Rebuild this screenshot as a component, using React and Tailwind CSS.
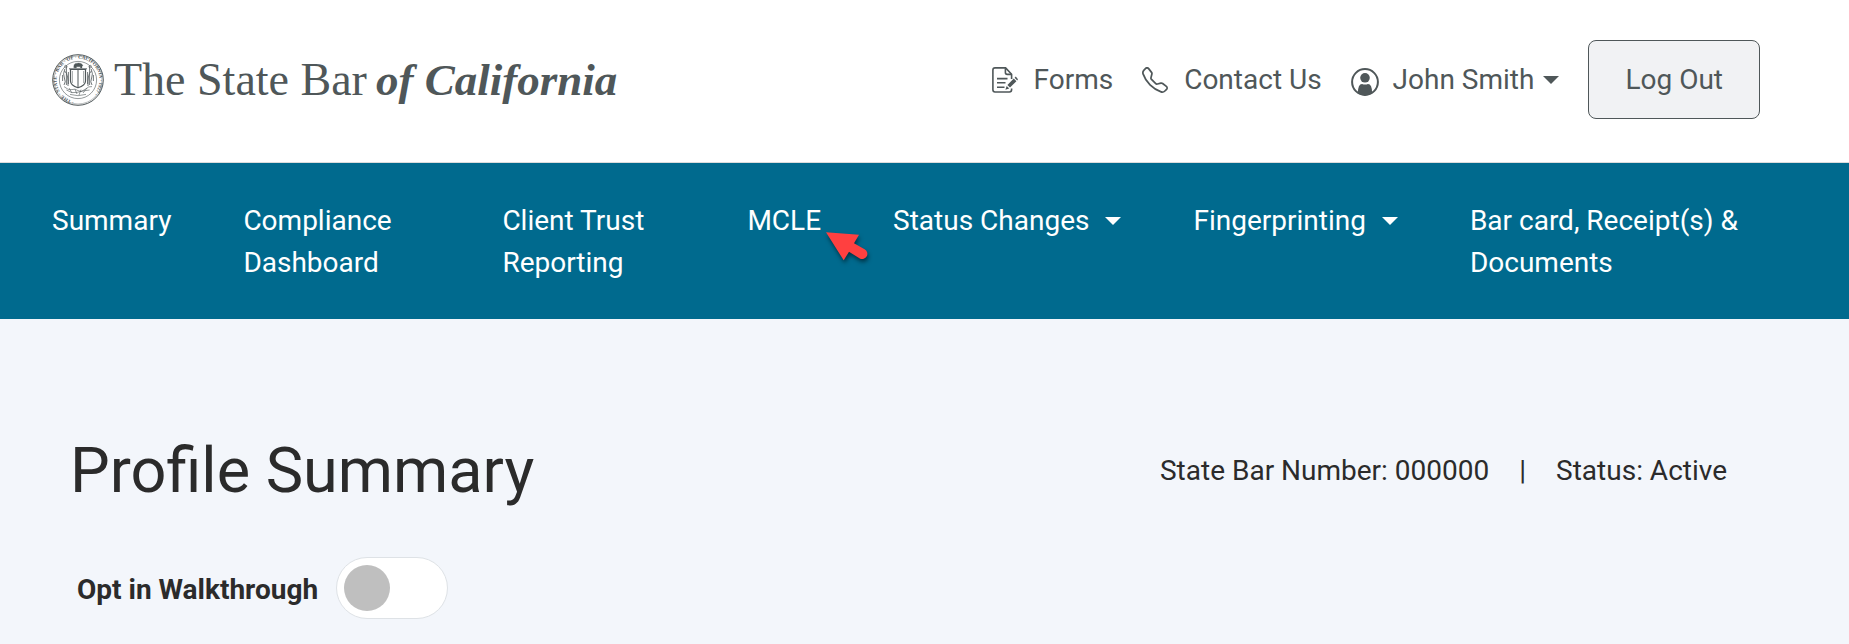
import React from "react";
import { BsTelephone } from "react-icons/bs";

const Caret = () => (
  <svg viewBox="0 0 16 8" className="h-2 w-4 shrink-0" aria-hidden="true">
    <path d="M0 0H16L8 8Z" fill="currentColor" />
  </svg>
);

const FormsIcon = () => (
  <svg viewBox="0 0 26 26" className="size-[26px] shrink-0" fill="none" stroke="currentColor" strokeWidth="1.6" aria-hidden="true">
    <path d="M19.6 21.5V22.6Q19.6 25 17.4 25H3Q.9 25 .9 22.8V3Q.9.9 3 .9H13.6L19.6 7.2V12" />
    <path d="M13.4 1.2V5.6Q13.4 7.4 15.2 7.4H19.4" />
    <path d="M5 11.6H15.5M5 15.8H13.5M5 20.2H12.5" />
    <path d="M15.4 18L21.8 11.6L24.4 14.2L18 20.6ZM22.6 10.8L23.8 9.6L26 12.2L25.2 13.4ZM14.7 19L17.2 21.5L13.4 22.7Z" fill="currentColor" stroke="none" />
  </svg>
);

const UserIcon = () => (
  <svg viewBox="0 0 28 28" className="mt-1 size-7 shrink-0" aria-hidden="true">
    <circle cx="14" cy="14" r="12.9" fill="none" stroke="currentColor" strokeWidth="2" />
    <circle cx="14" cy="9.8" r="4.8" fill="currentColor" />
    <path d="M6.8 25.2Q7 16 11 16Q14 17.2 17 16Q21 16 21.2 25.2Q14 30 6.8 25.2Z" fill="currentColor" />
  </svg>
);

const Seal = () => (
  <svg viewBox="0 0 52 52" className="size-[52px] shrink-0" fill="none" stroke="currentColor" aria-hidden="true">
    <defs>
      <path id="seal-top" d="M26 47.5A21.5 21.5 0 1 1 26.1 47.5" />
    </defs>
    <circle cx="26" cy="26" r="25.3" strokeWidth="1" />
    <circle cx="26" cy="26" r="24" strokeWidth="0.4" />
    <circle cx="26" cy="26" r="18.6" strokeWidth="0.6" />
    <text fill="currentColor" stroke="none" fontSize="5" fontWeight="bold" fontFamily="Liberation Serif, serif">
      <textPath href="#seal-top" startOffset="4">· THE · STATE · BAR · OF · CALIFORNIA · 1927 ·</textPath>
    </text>
    <path d="M18.5 15.5H33.5V27Q33.5 31.5 26 33.8Q18.5 31.5 18.5 27Z" fill="white" strokeWidth="1.2" />
    <path d="M26 16V33.4" strokeWidth="1" />
    <path d="M20.4 17V29M31.6 17V29" strokeWidth="0.5" />
    <path d="M21.8 13.8Q21.5 9.6 24 9.4Q27 8.2 29.5 9.8L31 11.6L30 12.2V14H28.4V12.8H24.4V14Z" fill="currentColor" strokeWidth="0.3" />
    <path d="M17 14.8H35" strokeWidth="0.9" />
    <path d="M14.4 12V31M12.6 17Q15 19 15.6 23T16 32M12.8 15Q10.6 20 12.4 24T12 31M16.4 18V30M10.6 21V27M37.6 12V31M39.4 17Q37 19 36.4 23T36 32M39.2 15Q41.4 20 39.6 24T40 31M35.6 18V30M41.4 21V27" strokeWidth="0.8" />
    <circle cx="13.8" cy="12.6" r="1.3" strokeWidth="0.6" />
    <circle cx="38.2" cy="12.6" r="1.3" strokeWidth="0.6" />
    <path d="M12 32.6Q17 37 20 35.6T26 36.6T33 35.4T40 32.6M14.4 36Q20 40 25 38.4T37.6 36M18 40.4Q26 43 34 40.4M17 34L20 39M35 34L31 39M23 35.4L25 40M29 35.6L27 41" strokeWidth="0.6" />
  </svg>
);

const Pointer = () => (
  <svg viewBox="0 0 48 38" className="absolute top-[31px] left-[78px] h-[38px] w-12 drop-shadow-[1px_3px_2px_rgba(0,0,0,0.5)]" aria-hidden="true">
    <path d="M1 1.3L34 3.7L29 12.3L39.6 18.3A5 5 0 0 1 34.8 27.4L24 20.8L18.7 29.3Z" fill="#ff4040" />
  </svg>
);

const navItems = [
  { label: "Summary" },
  { label: "Compliance Dashboard", width: "w-[187px]" },
  { label: "Client Trust Reporting", width: "w-[173px]" },
  { label: "MCLE", pointer: true },
  { label: "Status Changes", menu: true },
  { label: "Fingerprinting", menu: true },
  { label: "Bar card, Receipt(s) & Documents", width: "w-[300px]" },
];

export default function App() {
  return (
    <div className="min-h-screen bg-[#f3f6fb] font-[Roboto,sans-serif] text-[28px] leading-[42px] text-[#2b2b2b]">
      <header className="flex items-center justify-between border-b border-[#dcdcdc] bg-white pt-10 pr-[89px] pb-[43px] pl-[52px] text-[#4f5759]">
        <a href="#home" className="flex items-center gap-[10px] whitespace-nowrap">
          <Seal />
          <span className="flex items-baseline gap-[9px] font-['Liberation_Serif',serif] text-[46px] leading-[52px]">
            <span>The State Bar</span>
            <em className="text-[45px] font-bold">of California</em>
          </span>
        </a>
        <div className="flex items-center gap-[29px] whitespace-nowrap">
          <a href="#forms" className="flex items-center gap-4">
            <FormsIcon />
            Forms
          </a>
          <a href="#contact" className="flex items-center gap-4">
            <BsTelephone className="size-[26px] shrink-0" />
            Contact Us
          </a>
          <button type="button" className="flex items-center gap-[14px]">
            <UserIcon />
            <span className="flex items-center gap-[9px]">
              John Smith
              <Caret />
            </span>
          </button>
          <button type="button" className="rounded-lg border border-[#4f5759] bg-[#f1f2f4] px-9 py-[18px] leading-[41px]">
            Log Out
          </button>
        </div>
      </header>

      <nav className="bg-[#006a8e] pt-[37px] pr-[52px] pb-[35px] pl-[52px] text-white">
        <ul className="flex items-start gap-[72px]">
          {navItems.map((item) => (
            <li key={item.label} className={item.width ?? "whitespace-nowrap"}>
              {item.menu ? (
                <button type="button" className="flex items-center gap-4">
                  {item.label}
                  <Caret />
                </button>
              ) : (
                <a href="#section" className="relative block">
                  {item.label}
                  {item.pointer && <Pointer />}
                </a>
              )}
            </li>
          ))}
        </ul>
      </nav>

      <main className="pt-[110px] pr-[122px] pb-6 pl-[70px]">
        <div className="flex items-center justify-between">
          <h1 className="text-[63px] leading-[84px]">Profile Summary</h1>
          <p className="flex gap-[30px]">
            <span>State Bar Number: 000000</span>
            <span>|</span>
            <span>Status: Active</span>
          </p>
        </div>
        <div className="mt-11 ml-[7px] flex w-fit items-center gap-[18px] font-bold">
          <label htmlFor="walkthrough" className="pt-[3px]">Opt in Walkthrough</label>
          <input
            id="walkthrough"
            type="checkbox"
            role="switch"
            className="flex h-[62px] w-28 appearance-none items-center rounded-full border border-[#dee2e6] bg-white px-[7px] before:size-[46px] before:rounded-full before:bg-[#bfbfbf] checked:justify-end"
          />
        </div>
      </main>
    </div>
  );
}
